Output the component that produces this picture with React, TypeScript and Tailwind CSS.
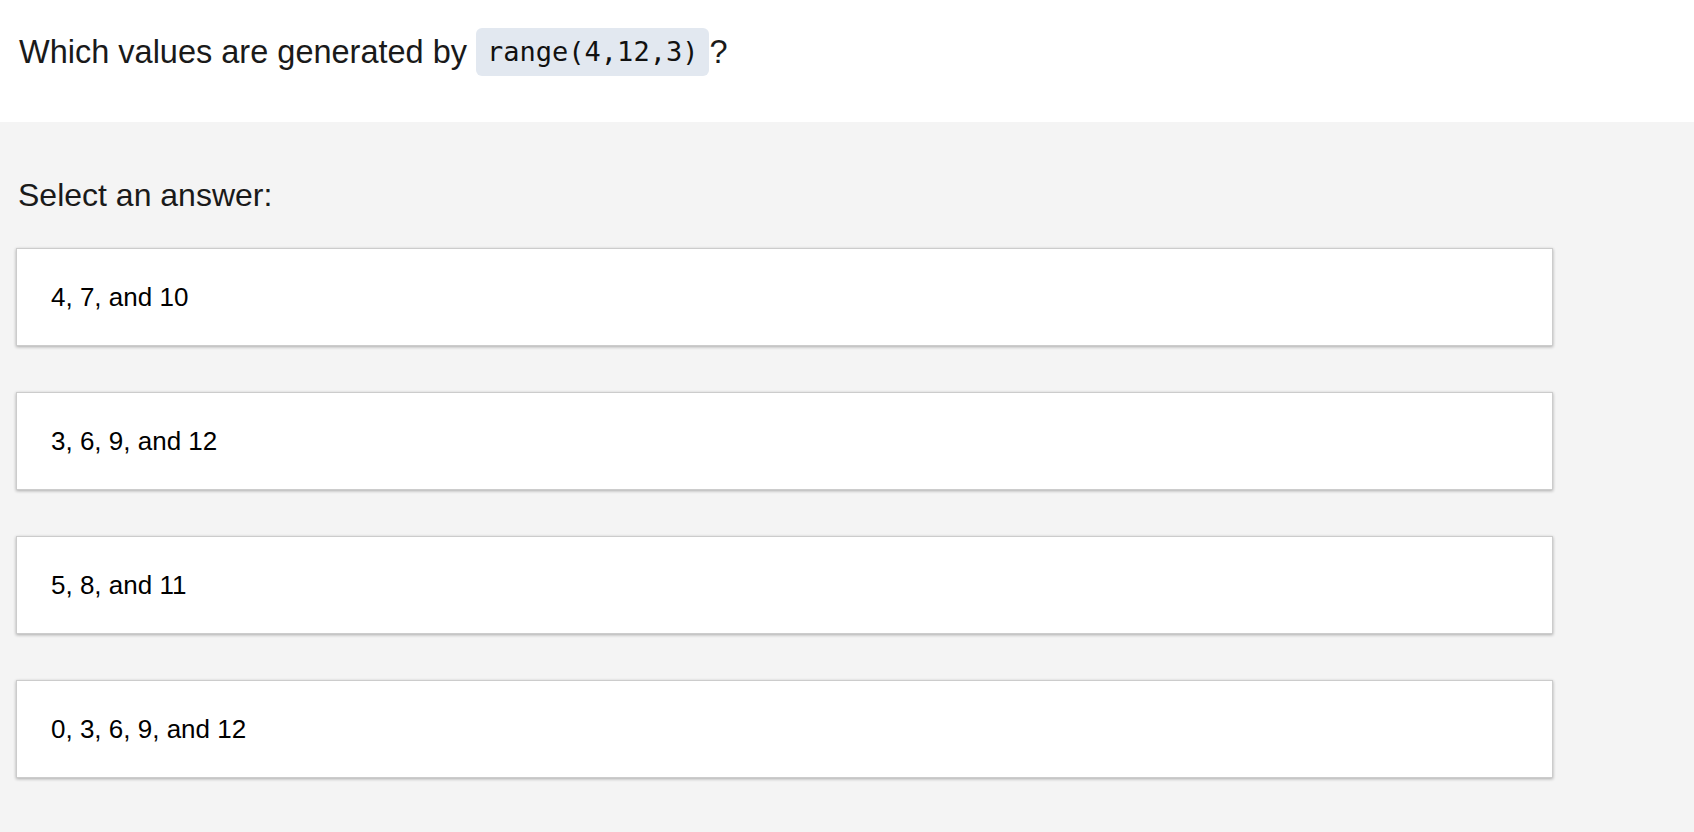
const answers = ['4, 7, and 10', '3, 6, 9, and 12', '5, 8, and 11', '0, 3, 6, 9, and 12'];

export default function App() {
  return (
    <div className="min-h-[832px] bg-[#f4f4f4] text-[#1a1a1a]" style={{ fontFamily: '"Liberation Sans", Arial, sans-serif' }}>
      <div className="bg-white h-[122px] pl-[19px] pt-[28px]">
        <div className="flex items-center text-[32.5px] leading-[48px]">
          <span className="whitespace-pre">Which values are generated by </span>
          <code
            className="h-[48px] flex items-center px-[11px] rounded-[6px] bg-[#e2e8f0] text-[27px] text-[#111111]"
            style={{ fontFamily: '"DejaVu Sans Mono", monospace' }}
          >
            range(4,12,3)
          </code>
          <span>?</span>
        </div>
      </div>

      <div className="pl-[16px] pt-[49px] pb-[54px]">
        <p className="text-[32px] leading-[48px] pl-[2px]">Select an answer:</p>
        <div className="mt-[29px] flex flex-col gap-[46px]">
          {answers.map((a) => (
            <div
              key={a}
              className="w-[1537px] h-[98px] bg-white border border-[#cccccc] shadow-[0_1px_3px_rgba(0,0,0,0.3)] flex items-center pl-[34px] text-[26px] text-black"
            >
              {a}
            </div>
          ))}
        </div>
      </div>
    </div>
  );
}
